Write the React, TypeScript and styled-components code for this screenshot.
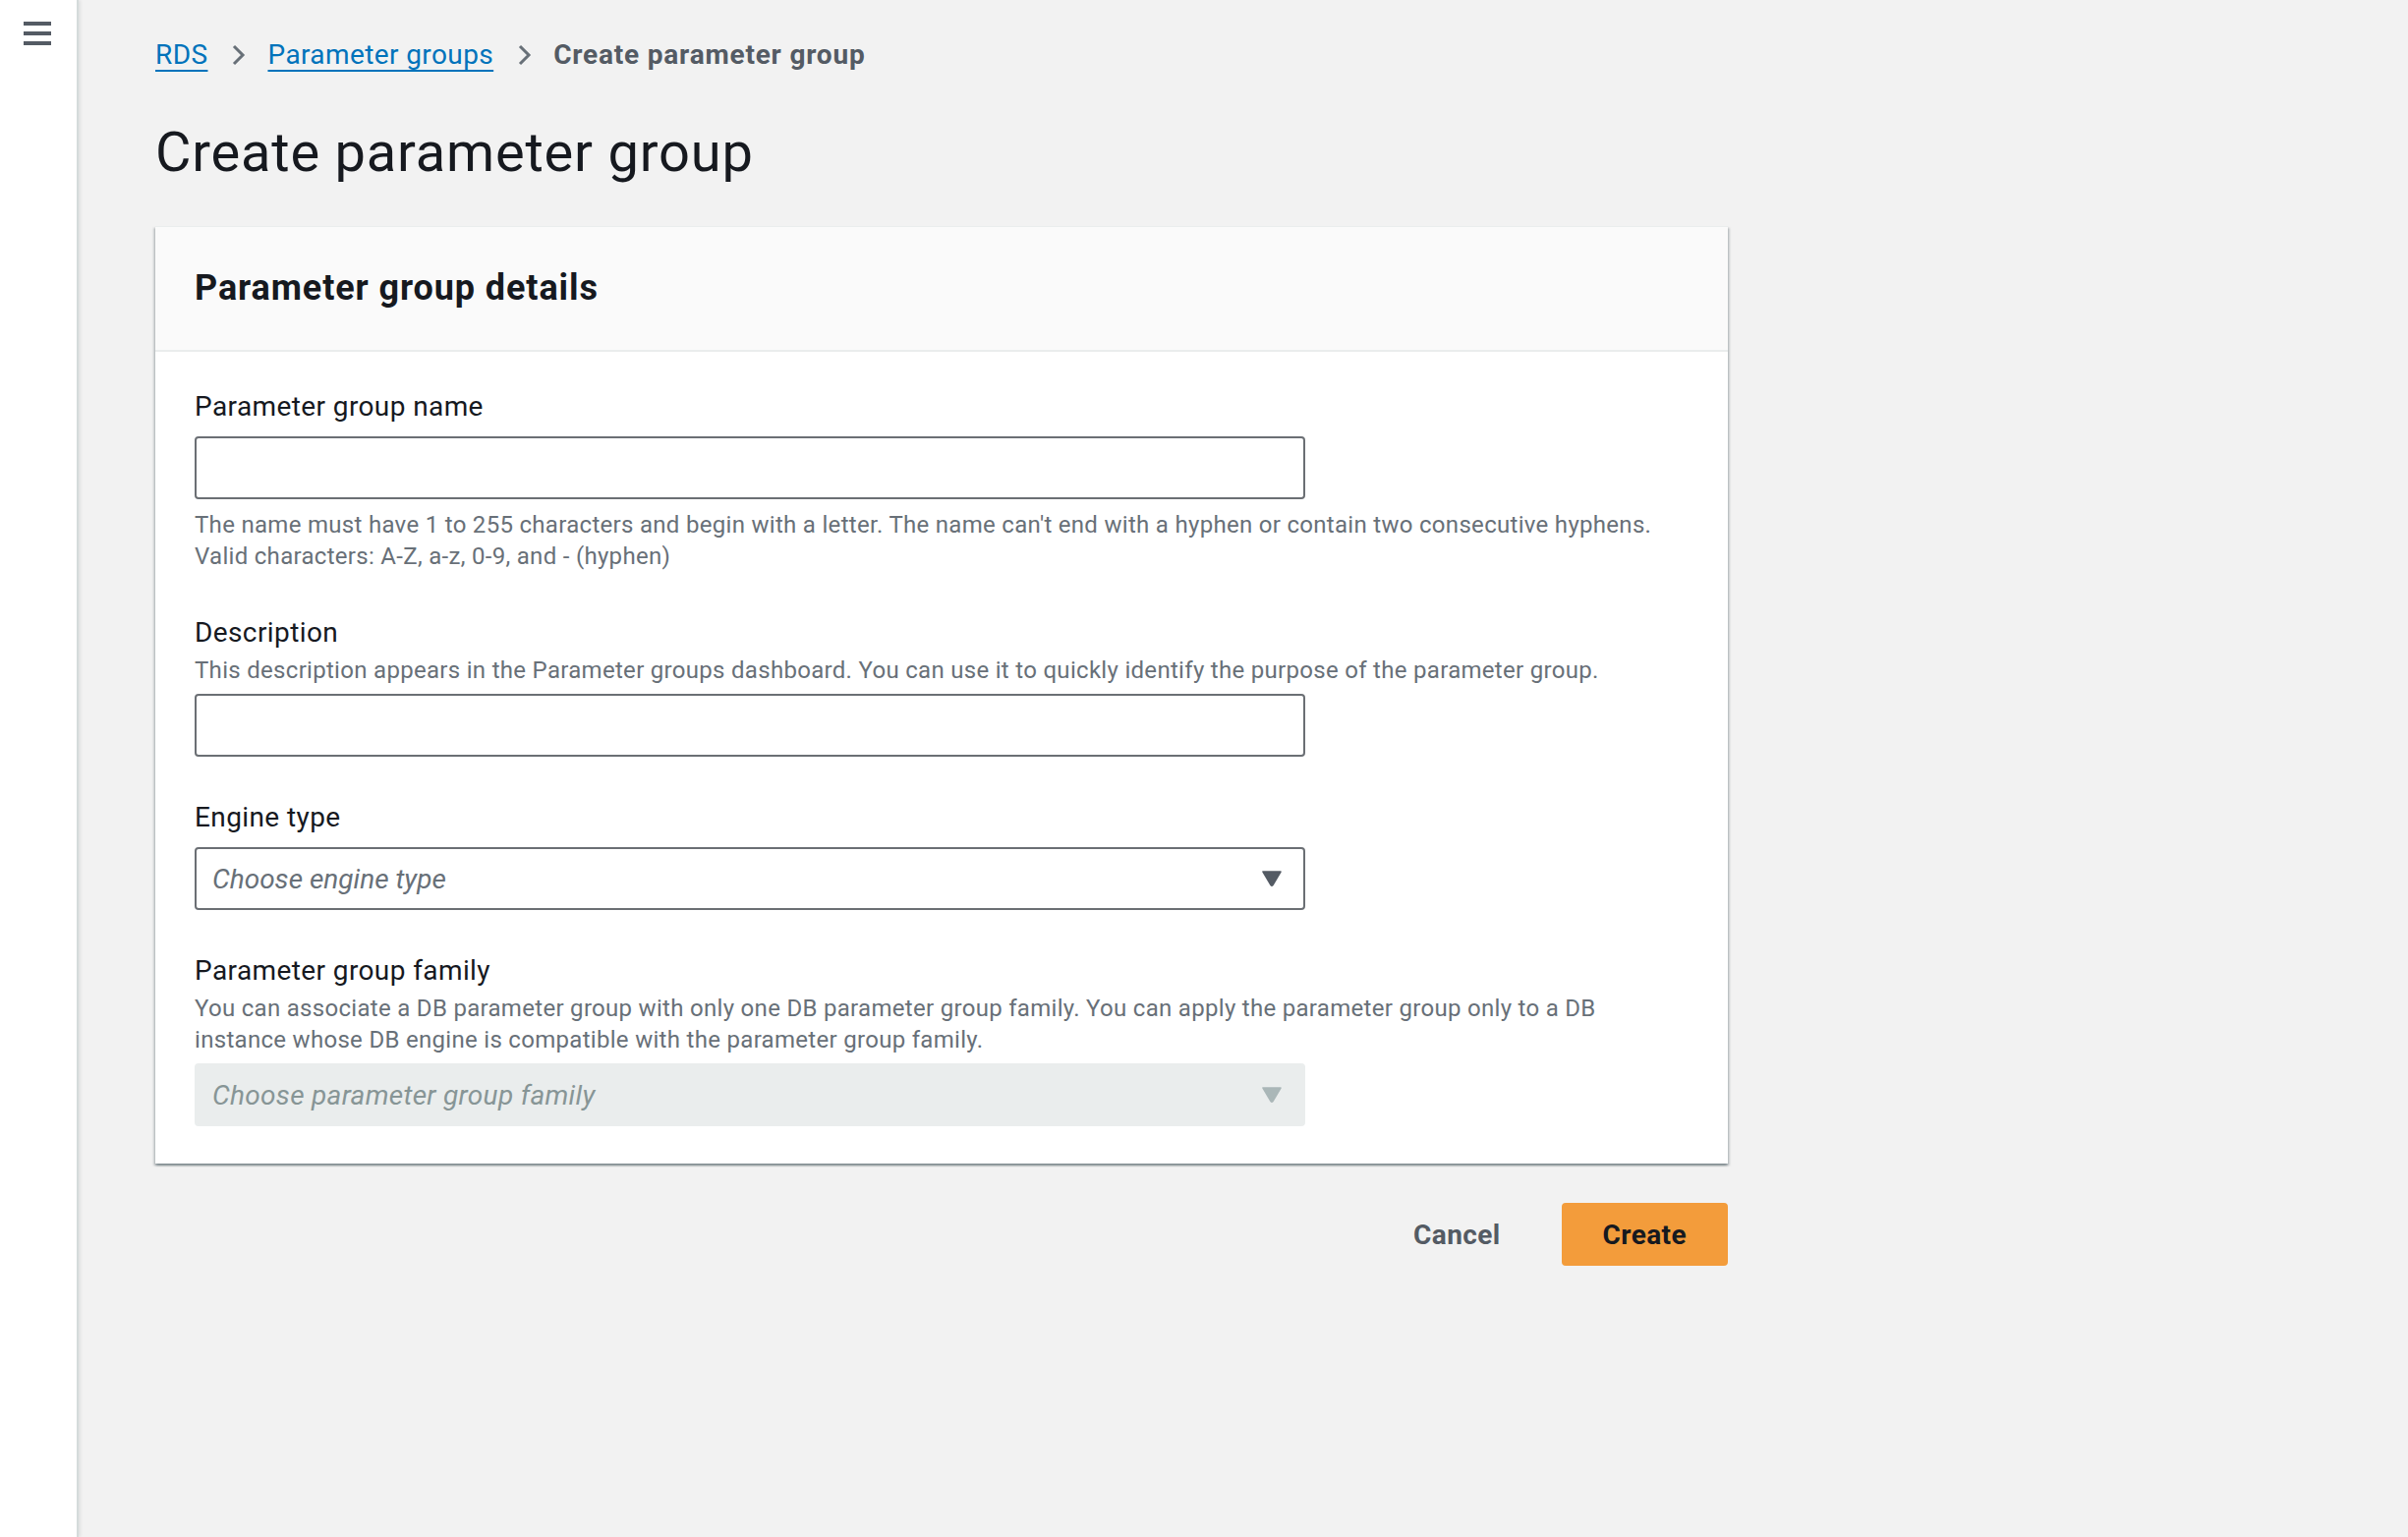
import React from "react";
import styled, { createGlobalStyle } from "styled-components";

const GlobalStyle = createGlobalStyle`
  html, body {
    margin: 0;
    padding: 0;
    background: #f2f2f2;
  }
  body {
    font-family: Roboto, "Liberation Sans", Arial, sans-serif;
    color: #16191f;
  }
  * {
    box-sizing: border-box;
  }
`;

const Page = styled.div`
  display: flex;
  min-height: 100vh;
`;

const Sidebar = styled.aside`
  width: 80px;
  flex-shrink: 0;
  background: #ffffff;
  border-right: 2px solid #d5dbdb;
  box-shadow: 2px 0 3px rgba(0, 28, 36, 0.08);
  padding: 22px 0 0 24px;
`;

const MenuButton = styled.button`
  display: flex;
  flex-direction: column;
  gap: 6px;
  width: 28px;
  padding: 0;
  border: 0;
  background: none;
  cursor: pointer;
`;

const MenuBar = styled.span`
  display: block;
  height: 4px;
  width: 28px;
  background: #545b64;
`;

const Main = styled.main`
  flex: 1;
  padding: 36px 0 0 78px;
`;

const Breadcrumbs = styled.nav`
  display: flex;
  align-items: center;
  font-size: 28px;
  line-height: 40px;
  letter-spacing: 0.4px;
`;

const Crumb = styled.a`
  color: #0073bb;
  text-decoration: underline;
  text-decoration-thickness: 2px;
  text-underline-offset: 6px;
  cursor: pointer;
`;

const CurrentCrumb = styled.span`
  color: #545b64;
  font-weight: 700;
  letter-spacing: 0.8px;
`;

const Separator = styled.svg`
  width: 16px;
  height: 24px;
  margin: 0 21px 0 24px;
  flex-shrink: 0;
`;

const Title = styled.h1`
  margin: 45px 0 41px;
  font-size: 56px;
  line-height: 68px;
  font-weight: 400;
  letter-spacing: 0.8px;
  color: #16191f;
`;

const Panel = styled.section`
  width: 1600px;
  background: #ffffff;
  border-top: 1px solid #eaeded;
  box-shadow: 0 2px 2px 0 rgba(0, 28, 36, 0.3),
    2px 2px 2px 0 rgba(0, 28, 36, 0.15),
    -2px 2px 2px 0 rgba(0, 28, 36, 0.15);
`;

const PanelHeader = styled.header`
  display: flex;
  align-items: center;
  height: 127px;
  padding: 0 40px;
  background: #fafafa;
  border-bottom: 2px solid #eaeded;
`;

const PanelTitle = styled.h2`
  margin: 0 0 2px;
  font-size: 36px;
  line-height: 44px;
  font-weight: 700;
  letter-spacing: 0.9px;
  color: #16191f;
`;

const PanelBody = styled.div`
  display: flex;
  flex-direction: column;
  gap: 40px;
  padding: 34px 40px 38px;
`;

const Field = styled.div`
  display: flex;
  flex-direction: column;
`;

const Label = styled.label`
  font-size: 28px;
  line-height: 44px;
  letter-spacing: 0.4px;
  color: #16191f;
`;

const Hint = styled.p<{ $after?: boolean }>`
  margin: ${(p) => (p.$after ? "10px 0 0" : "0")};
  font-size: 24px;
  line-height: 32px;
  color: #687078;
  letter-spacing: 0.3px;
`;

const Control = styled.div<{ $disabled?: boolean }>`
  display: flex;
  align-items: center;
  justify-content: space-between;
  width: 1130px;
  height: 64px;
  margin-top: 8px;
  padding: 0 22px 0 16px;
  border-radius: 4px;
  border: 2px solid ${(p) => (p.$disabled ? "#eaeded" : "#6b6f74")};
  background: ${(p) => (p.$disabled ? "#eaeded" : "#ffffff")};
`;

const TextInput = styled.input`
  width: 1130px;
  height: 64px;
  margin-top: 8px;
  padding: 0 16px;
  border-radius: 4px;
  border: 2px solid #6b6f74;
  background: #ffffff;
  font: inherit;
  font-size: 28px;
  outline: none;
`;

const Placeholder = styled.span<{ $disabled?: boolean }>`
  font-size: 28px;
  font-style: italic;
  letter-spacing: ${(p) => (p.$disabled ? "0.3px" : "0")};
  color: ${(p) => (p.$disabled ? "#879596" : "#687078")};
`;

const Caret = styled.svg`
  width: 20px;
  height: 16px;
`;

const Actions = styled.div`
  display: flex;
  justify-content: flex-end;
  align-items: center;
  gap: 20px;
  width: 1600px;
  margin-top: 40px;
`;

const Button = styled.button<{ $primary?: boolean }>`
  height: 64px;
  padding: 0 40px;
  border-radius: 4px;
  border: 2px solid ${(p) => (p.$primary ? "#f39c3b" : "transparent")};
  background: ${(p) => (p.$primary ? "#f39c3b" : "transparent")};
  color: ${(p) => (p.$primary ? "#16191f" : "#545b64")};
  font-family: inherit;
  font-size: 28px;
  font-weight: 700;
  letter-spacing: 0.4px;
  cursor: pointer;
`;

const Chevron = () => (
  <Separator viewBox="0 0 16 24">
    <polyline
      points="3,3 12,12 3,21"
      fill="none"
      stroke="#687078"
      strokeWidth="3"
    />
  </Separator>
);

const CaretDown = ({ color }: { color: string }) => (
  <Caret viewBox="0 0 20 16">
    <path
      d="M1 1 H19 L11 14.5 Q10 16 9 14.5 Z"
      fill={color}
      stroke={color}
      strokeWidth="1.5"
      strokeLinejoin="round"
    />
  </Caret>
);

export default function App() {
  return (
    <Page>
      <GlobalStyle />
      <Sidebar>
        <MenuButton aria-label="Open navigation">
          <MenuBar />
          <MenuBar />
          <MenuBar />
        </MenuButton>
      </Sidebar>
      <Main>
        <Breadcrumbs>
          <Crumb>RDS</Crumb>
          <Chevron />
          <Crumb>Parameter groups</Crumb>
          <Chevron />
          <CurrentCrumb>Create parameter group</CurrentCrumb>
        </Breadcrumbs>

        <Title>Create parameter group</Title>

        <Panel>
          <PanelHeader>
            <PanelTitle>Parameter group details</PanelTitle>
          </PanelHeader>
          <PanelBody>
            <Field>
              <Label>Parameter group name</Label>
              <TextInput type="text" />
              <Hint $after>
                The name must have 1 to 255 characters and begin with a letter.
                The name can't end with a hyphen or contain two consecutive
                hyphens.
                <br />
                Valid characters: A-Z, a-z, 0-9, and - (hyphen)
              </Hint>
            </Field>

            <Field>
              <Label>Description</Label>
              <Hint>
                This description appears in the Parameter groups dashboard. You
                can use it to quickly identify the purpose of the parameter
                group.
              </Hint>
              <TextInput type="text" />
            </Field>

            <Field>
              <Label>Engine type</Label>
              <Control>
                <Placeholder>Choose engine type</Placeholder>
                <CaretDown color="#545b64" />
              </Control>
            </Field>

            <Field>
              <Label>Parameter group family</Label>
              <Hint>
                You can associate a DB parameter group with only one DB
                parameter group family. You can apply the parameter group only
                to a DB
                <br />
                instance whose DB engine is compatible with the parameter group
                family.
              </Hint>
              <Control $disabled>
                <Placeholder $disabled>Choose parameter group family</Placeholder>
                <CaretDown color="#aab7b8" />
              </Control>
            </Field>
          </PanelBody>
        </Panel>

        <Actions>
          <Button>Cancel</Button>
          <Button $primary>Create</Button>
        </Actions>
      </Main>
    </Page>
  );
}
